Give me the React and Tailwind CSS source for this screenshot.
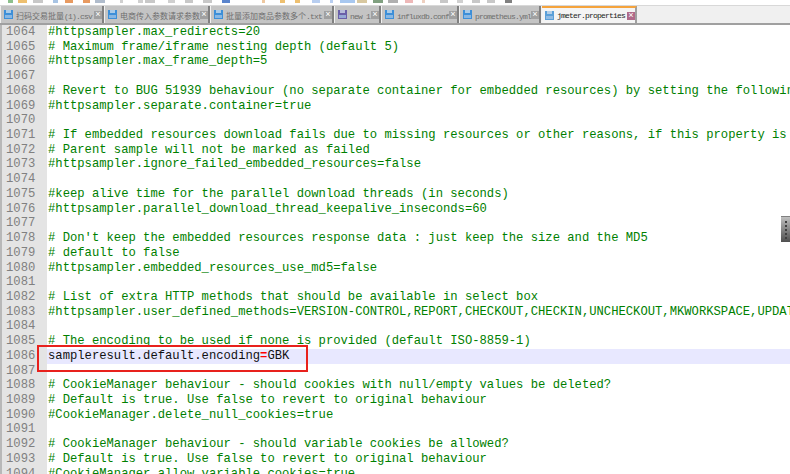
import React from 'react';

const lines = [
    [1064, '#httpsampler.max_redirects=20'],
    [1065, '# Maximum frame/iframe nesting depth (default 5)'],
    [1066, '#httpsampler.max_frame_depth=5'],
    [1067, ''],
    [1068, '# Revert to BUG 51939 behaviour (no separate container for embedded resources) by setting the following'],
    [1069, '#httpsampler.separate.container=true'],
    [1070, ''],
    [1071, '# If embedded resources download fails due to missing resources or other reasons, if this property is true'],
    [1072, '# Parent sample will not be marked as failed'],
    [1073, '#httpsampler.ignore_failed_embedded_resources=false'],
    [1074, ''],
    [1075, '#keep alive time for the parallel download threads (in seconds)'],
    [1076, '#httpsampler.parallel_download_thread_keepalive_inseconds=60'],
    [1077, ''],
    [1078, "# Don't keep the embedded resources response data : just keep the size and the MD5"],
    [1079, '# default to false'],
    [1080, '#httpsampler.embedded_resources_use_md5=false'],
    [1081, ''],
    [1082, '# List of extra HTTP methods that should be available in select box'],
    [1083, '#httpsampler.user_defined_methods=VERSION-CONTROL,REPORT,CHECKOUT,CHECKIN,UNCHECKOUT,MKWORKSPACE,UPDATE,LABEL'],
    [1084, ''],
    [1085, '# The encoding to be used if none is provided (default ISO-8859-1)'],
    [1086, null],
    [1087, ''],
    [1088, '# CookieManager behaviour - should cookies with null/empty values be deleted?'],
    [1089, '# Default is true. Use false to revert to original behaviour'],
    [1090, '#CookieManager.delete_null_cookies=true'],
    [1091, ''],
    [1092, '# CookieManager behaviour - should variable cookies be allowed?'],
    [1093, '# Default is true. Use false to revert to original behaviour'],
    [1094, '#CookieManager.allow_variable_cookies=true'],
];

const tabs = [
    { cjk: '扫码交易批量', latin: '(1).csv', width: 'w-[103px]', color: 'bg-[#3d8fd8]' },
    { cjk: '电商传入参数请求参数', latin: '', width: 'w-[105px]', color: 'bg-[#3d8fd8]' },
    { cjk: '批量添加商品参数多个', latin: '.txt', width: 'w-[123px]', color: 'bg-[#3d8fd8]' },
    { cjk: '', latin: 'new 1', width: 'w-[46px]', color: 'bg-[#6a5fa8]' },
    { cjk: '', latin: 'influxdb.conf', width: 'w-[77px]', color: 'bg-[#3d8fd8]' },
    { cjk: '', latin: 'prometheus.yml', width: 'w-[81px]', color: 'bg-[#3d8fd8]' },
];

// icons of the toolbar, only their lower edge is left in the shot
const toolbarBits = [
    'ml-[8px] w-[5px] bg-[#8cc08c]', 'ml-[5px] w-[9px] bg-[#eec070]', 'ml-[6px] w-[10px] bg-[#c8c8c8]',
    'ml-[10px] w-[5px] bg-[#a8c4e4]', 'ml-[7px] w-[8px] bg-[#e89a60]', 'ml-[10px] w-[7px] bg-[#e89a60]',
    'ml-[5px] w-[10px] bg-[#b0bccc]', 'ml-[15px] w-[3px] bg-[#d0d0d0]', 'ml-[15px] w-[5px] bg-[#d0d0d0]',
    'ml-[2px] w-[10px] bg-[#c8c8c8]', 'ml-[13px] w-[7px] bg-[#d0d0d0]', 'ml-[10px] w-[8px] bg-[#c8c8c8]',
    'ml-[10px] w-[9px] bg-[#c8c8c8]', 'ml-[10px] w-[8px] bg-[#5a84cc]', 'ml-[32px] w-[3px] bg-[#eec8a0]',
    'ml-[15px] w-[5px] bg-[#eec070]', 'ml-[10px] w-[5px] bg-[#eec070]', 'ml-[12px] w-[8px] bg-[#b8cef0]',
    'ml-[10px] w-[3px] bg-[#b8cef0]', 'ml-[7px] w-[15px] bg-[#a8c8f0]', 'ml-[2px] w-[10px] bg-[#d8c8a0]',
    'ml-[6px] w-[10px] bg-[#80a080]', 'ml-[5px] w-[10px] bg-[#b0b0b0]', 'ml-[7px] w-[8px] bg-[#eeb8b8]',
    'ml-[9px] w-[3px] bg-[#eed0c0]', 'ml-[15px] w-[8px] bg-[#c8c8c8]', 'ml-[9px] w-[6px] bg-[#d0d0d0]',
    'ml-[9px] w-[8px] bg-[#c8c8c8]', 'ml-[7px] w-[8px] bg-[#c8c8c8]', 'ml-[10px] w-[7px] bg-[#808080]',
];

const FileIcon = ({ color }) => (
    <span className={`relative w-[9px] h-[9px] shrink-0 ${color}`}>
        <span className="absolute left-[2px] top-0 w-[5px] h-[3px] bg-[#d8e4f0] opacity-70"></span>
        <span className="absolute left-[1px] bottom-[1px] w-[7px] h-[3px] bg-[#a8c8e8] opacity-70"></span>
    </span>
);

const CloseBox = ({ active }) => (
    <span className={`w-[8px] h-[8px] shrink-0 text-white text-[9px] leading-[8px] text-center ${active ? 'bg-[#b06a8a]' : 'bg-[#a0a0a0]'}`}>×</span>
);

const Tab = ({ tab }) => (
    <div className={`${tab.width} h-[17px] flex items-center pl-[3px] bg-[#c4c4c4] border-r-2 border-r-[#808080] shrink-0`}>
        <FileIcon color={tab.color} />
        <span className="flex-1 min-w-0 pl-[3px] whitespace-nowrap overflow-hidden text-[#6e6e6e]">
            <span className="text-[8px] font-['Noto_Sans_CJK_SC',sans-serif]">{tab.cjk}</span>
            <span className="text-[8px] tracking-[-0.8px]">{tab.latin}</span>
        </span>
        <CloseBox />
    </div>
);

export default function App() {
    return (
        <div className="relative w-[790px] h-[474px] overflow-hidden bg-white font-['Liberation_Mono',monospace]">
            {/* toolbar, cut off by the top of the screenshot */}
            <div className="h-[6px] flex items-start bg-white border-b border-b-[#d8d8d8]">
                {toolbarBits.map((bit, i) => (
                    <span key={i} className={`${bit} h-[3px] shrink-0`}></span>
                ))}
            </div>

            {/* tab bar */}
            <div className="h-[17px] flex items-end pl-[1px] gap-[1px] bg-[#f0f0f0]">
                {tabs.map((tab) => <Tab key={tab.latin + tab.cjk} tab={tab} />)}
                <div className="w-[95px] h-[17px] flex items-center pl-[3px] bg-[#f4f4f4] border-t-2 border-t-[#f5a33c] border-r-2 border-r-[#a0a0a0] shrink-0">
                    <FileIcon color="bg-[#5a9fd8]" />
                    <span className="flex-1 min-w-0 pl-[3px] whitespace-nowrap overflow-hidden text-[8px] tracking-[-0.8px] text-[#222222]">jmeter.properties</span>
                    <CloseBox active />
                </div>
            </div>
            <div className="h-[2px] bg-[#a0a0a0]"></div>

            {/* editor */}
            <div className="flex">
                <div className="w-[47px] shrink-0 bg-[#e4e4e4] border-l-2 border-l-[#b8b8b8]">
                    {lines.map(([no]) => (
                        <div key={no} className="h-[14.72px] leading-[14.72px] pl-[4px] text-[12.2px] text-[#808080]">{no}</div>
                    ))}
                </div>
                <div className="flex-1 min-w-0 overflow-hidden">
                    {lines.map(([no, text]) => (
                        text === null ? (
                            <div key={no} className="h-[14.72px] leading-[14.72px] pl-[1px] text-[12.2px] whitespace-pre bg-[#e8e8ff] text-[#111111]">
                                sampleresult.default.encoding<span className="text-[#ff0000] font-bold">=</span>GBK
                            </div>
                        ) : (
                            <div key={no} className="h-[14.72px] leading-[14.72px] pl-[1px] text-[12.2px] whitespace-pre text-[#008000]">{text}</div>
                        )
                    ))}
                </div>
            </div>

            {/* red annotation box */}
            <div className="absolute left-[37px] top-[345px] w-[271px] h-[27px] border-2 border-[#e8211d]"></div>

            {/* floating handle at the right edge */}
            <div className="absolute left-[781px] top-[216px] w-[9px] h-[26px] border-t border-t-[#808080] bg-gradient-to-b from-[#c0c0c0] to-[#505050] flex flex-col gap-[2px] pt-[4px] pl-[4px]">
                {[0, 1, 2, 3, 4].map((row) => (
                    <span key={row} className="w-[2px] h-[2px] bg-[#404040] shrink-0"></span>
                ))}
            </div>
        </div>
    );
}
